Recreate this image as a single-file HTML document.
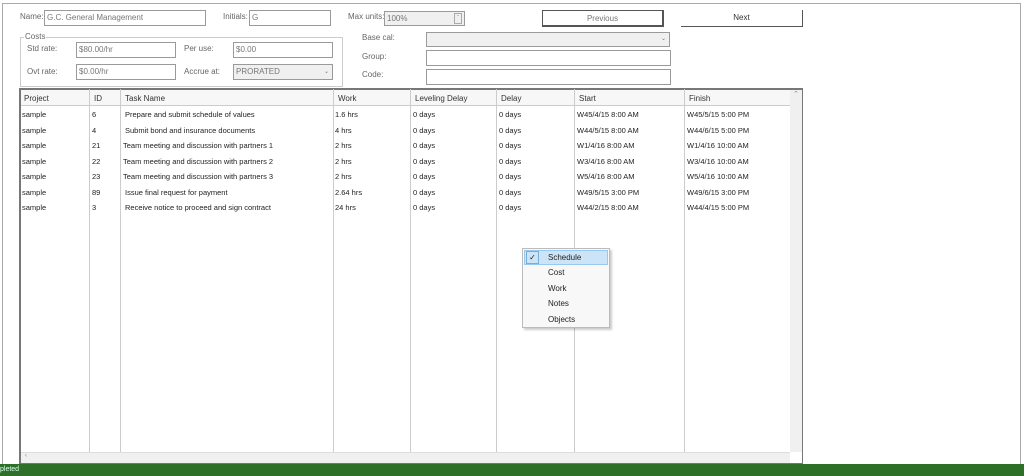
<!DOCTYPE html>
<html><head><style>
*{margin:0;padding:0;box-sizing:border-box}
body{width:1024px;height:476px;background:#fff;position:relative;overflow:hidden;font-family:"Liberation Sans",sans-serif;font-size:8px;color:#444}
.a{position:absolute}
.in{position:absolute;border:1px solid #9a9a9a;background:#fff;font-size:8px;color:#777;padding:2px 2px;line-height:10px}
.g{background:#f0f0f0}
.l{position:absolute;font-size:8px;color:#666;white-space:nowrap}
.vl{position:absolute;top:89px;width:1px;height:363px;background:#ccc}
.row{position:absolute;left:0;height:15px;font-size:7.5px;color:#222;white-space:nowrap}
.row span{position:absolute}
.mi{position:absolute;left:25px;font-size:8px;color:#222}
</style></head><body>
<div class="a" style="left:2px;top:3px;width:1019px;height:461px;border:1px solid #aaa;border-bottom:none"></div>

<div class="l" style="left:20px;top:12px">Name:</div>
<div class="in" style="left:44px;top:10px;width:162px;height:16px">G.C. General Management</div>
<div class="l" style="left:223px;top:12px">Initials:</div>
<div class="in" style="left:249px;top:10px;width:82px;height:16px">G</div>
<div class="l" style="left:348px;top:12px">Max units:</div>
<div class="in g" style="left:384px;top:11px;width:81px;height:15px">100%<span class="a" style="right:2px;top:1px;width:8px;height:11px;border:1px solid #aaa;font-size:6px;line-height:5px;text-align:center">-</span></div>
<div class="a" style="left:542px;top:10px;width:122px;height:17px;border:1px solid #555;border-width:1px 2px 2px 1px;text-align:center;font-size:8px;line-height:15px;color:#777">Previous</div>
<div class="a" style="left:681px;top:10px;width:122px;height:17px;border-right:1px solid #555;border-bottom:1px solid #555;text-align:center;font-size:8px;line-height:15px;color:#333">Next</div>

<div class="a" style="left:20px;top:37px;width:323px;height:50px;border:1px solid #ccc"></div>
<div class="l" style="left:24px;top:32px;background:#fff;padding:0 1px">Costs</div>
<div class="l" style="left:27px;top:44px">Std rate:</div>
<div class="in" style="left:76px;top:42px;width:100px;height:16px">$80.00/hr</div>
<div class="l" style="left:184px;top:44px">Per use:</div>
<div class="in" style="left:233px;top:42px;width:100px;height:16px">$0.00</div>
<div class="l" style="left:27px;top:67px">Ovt rate:</div>
<div class="in" style="left:76px;top:64px;width:100px;height:16px">$0.00/hr</div>
<div class="l" style="left:184px;top:67px">Accrue at:</div>
<div class="in g" style="left:233px;top:64px;width:100px;height:16px">PRORATED<span class="a" style="right:3px;top:2px;font-size:6px">⌄</span></div>
<div class="l" style="left:362px;top:33px">Base cal:</div>
<div class="in g" style="left:426px;top:32px;width:244px;height:15px"><span class="a" style="right:3px;top:1px;font-size:6px">⌄</span></div>
<div class="l" style="left:362px;top:52px">Group:</div>
<div class="in" style="left:426px;top:50px;width:245px;height:16px"></div>
<div class="l" style="left:362px;top:70px">Code:</div>
<div class="in" style="left:426px;top:69px;width:245px;height:16px"></div>

<div class="a" style="left:19px;top:88px;width:784px;height:376px;border:1px solid #777;border-width:2px 1px 1px 2px"></div>
<div class="a" style="left:21px;top:90px;width:769px;height:16px;background:#f7f7f7;border-bottom:1px solid #ccc"></div>
<div class="vl" style="left:89px"></div><div class="vl" style="left:120px"></div><div class="vl" style="left:333px"></div><div class="vl" style="left:410px"></div><div class="vl" style="left:496px"></div><div class="vl" style="left:574px"></div><div class="vl" style="left:684px"></div>
<div class="a" style="left:790px;top:90px;width:12px;height:362px;background:#f0f0f0;font-size:7px;color:#888;text-align:center">⌃</div>
<div class="a" style="left:21px;top:452px;width:769px;height:11px;background:#f0f0f0;border-top:1px solid #ddd;font-size:6px;color:#888;padding-left:4px">‹</div>

<div class="row" style="top:94px;font-size:8px;color:#333"><span style="left:24px">Project</span><span style="left:94px">ID</span><span style="left:125px">Task Name</span><span style="left:338px">Work</span><span style="left:415px">Leveling Delay</span><span style="left:501px">Delay</span><span style="left:579px">Start</span><span style="left:689px">Finish</span></div>

<div class="row" style="top:110px"><span style="left:22px">sample</span><span style="left:92px">6</span><span style="left:125px">Prepare and submit schedule of values</span><span style="left:335px">1.6 hrs</span><span style="left:413px">0 days</span><span style="left:499px">0 days</span><span style="left:577px">W45/4/15 8:00 AM</span><span style="left:687px">W45/5/15 5:00 PM</span></div>
<div class="row" style="top:125.5px"><span style="left:22px">sample</span><span style="left:92px">4</span><span style="left:125px">Submit bond and insurance documents</span><span style="left:335px">4 hrs</span><span style="left:413px">0 days</span><span style="left:499px">0 days</span><span style="left:577px">W44/5/15 8:00 AM</span><span style="left:687px">W44/6/15 5:00 PM</span></div>
<div class="row" style="top:141px"><span style="left:22px">sample</span><span style="left:92px">21</span><span style="left:123px">Team meeting and discussion with partners 1</span><span style="left:335px">2 hrs</span><span style="left:413px">0 days</span><span style="left:499px">0 days</span><span style="left:577px">W1/4/16 8:00 AM</span><span style="left:687px">W1/4/16 10:00 AM</span></div>
<div class="row" style="top:156.5px"><span style="left:22px">sample</span><span style="left:92px">22</span><span style="left:123px">Team meeting and discussion with partners 2</span><span style="left:335px">2 hrs</span><span style="left:413px">0 days</span><span style="left:499px">0 days</span><span style="left:577px">W3/4/16 8:00 AM</span><span style="left:687px">W3/4/16 10:00 AM</span></div>
<div class="row" style="top:172px"><span style="left:22px">sample</span><span style="left:92px">23</span><span style="left:123px">Team meeting and discussion with partners 3</span><span style="left:335px">2 hrs</span><span style="left:413px">0 days</span><span style="left:499px">0 days</span><span style="left:577px">W5/4/16 8:00 AM</span><span style="left:687px">W5/4/16 10:00 AM</span></div>
<div class="row" style="top:187.5px"><span style="left:22px">sample</span><span style="left:92px">89</span><span style="left:125px">Issue final request for payment</span><span style="left:335px">2.64 hrs</span><span style="left:413px">0 days</span><span style="left:499px">0 days</span><span style="left:577px">W49/5/15 3:00 PM</span><span style="left:687px">W49/6/15 3:00 PM</span></div>
<div class="row" style="top:203px"><span style="left:22px">sample</span><span style="left:92px">3</span><span style="left:125px">Receive notice to proceed and sign contract</span><span style="left:335px">24 hrs</span><span style="left:413px">0 days</span><span style="left:499px">0 days</span><span style="left:577px">W44/2/15 8:00 AM</span><span style="left:687px">W44/4/15 5:00 PM</span></div>

<div class="a" style="left:522px;top:248px;width:88px;height:80px;background:#f8f8f8;border:1px solid #bbb;box-shadow:2px 2px 2px rgba(0,0,0,.2)">
 <div class="a" style="left:1px;top:1px;width:84px;height:15px;background:#cce4f7;border:1px solid #99c9ef"></div>
 <div class="a" style="left:3px;top:2px;width:13px;height:13px;border:1px solid #7aaed6;font-size:8px;text-align:center;line-height:11px;color:#222">✓</div>
 <div class="mi" style="top:4px">Schedule</div>
 <div class="mi" style="top:19px">Cost</div>
 <div class="mi" style="top:35px">Work</div>
 <div class="mi" style="top:50px">Notes</div>
 <div class="mi" style="top:66px">Objects</div>
</div>

<div class="a" style="left:0;top:464px;width:1024px;height:12px;background:#2e7028;color:#dfe;font-size:7px;line-height:12px">pleted</div>
</body></html>
